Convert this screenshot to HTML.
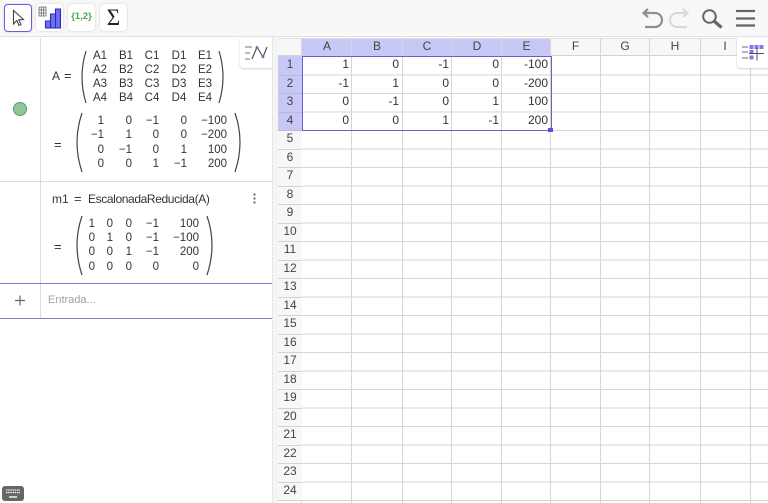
<!DOCTYPE html>
<html><head><meta charset="utf-8"><style>
*{box-sizing:border-box;margin:0;padding:0}
html,body{width:768px;height:503px;overflow:hidden;background:#fff;font-family:"Liberation Sans",sans-serif}
#wrap{position:absolute;left:0;top:0;width:768px;height:503px;filter:blur(.35px)}
.a{position:absolute}
#top{left:0;top:0;width:768px;height:37px;background:#f8f8f8;border-bottom:1px solid #e2e2e2}
.btn{position:absolute;top:4px;width:27px;height:27px;background:#fff;border-radius:4px;box-shadow:0 0 2px rgba(0,0,0,.18)}
#split{left:272px;top:37px;width:6px;height:466px;background:#f4f4f4;border-left:1px solid #e6e6e6}
#sheet{left:278px;top:38px;width:490px;height:465px;background-color:#fff;
background-image:repeating-linear-gradient(to bottom,transparent 0,transparent 17.5px,#d6d6d6 17.5px,#d6d6d6 18.5px);
background-position:0 19px}
#ch{left:278px;top:38px;width:490px;height:18px;background:#f7f7f7;border-bottom:1px solid #d2d2d2;border-top:1px solid #e2e2e2}
.vl{position:absolute;top:38px;height:465px;width:1px;background:#d6d6d6}
.cl{position:absolute;top:37px;height:18px;line-height:18px;font-size:12px;color:#444;text-align:center}
.sel{background:#c8c8f6}
.rl{position:absolute;left:278px;width:24px;height:18.5px;margin-top:1px;line-height:14px;font-size:12px;color:#444;text-align:center;background:#f7f7f7;border-bottom:1px solid #d2d2d2}
.rl.sel{background:#c8c8f6;border-bottom-color:#b9b9dd}
#grid{left:302px;top:56px;display:grid;grid-template-columns:50px 50px 50px 50px 49px;grid-auto-rows:18.5px;font-size:12px;color:#333}
#grid div{text-align:right;padding-right:3px;line-height:17.5px}
.m{position:absolute;font-size:11.5px;line-height:14px;height:14px;color:#333;white-space:nowrap}
.c{transform:translateX(-50%)}
.r{transform:translateX(-100%)}
svg{position:absolute;overflow:visible}
</style></head><body><div id="wrap">

<div class="a" id="top"></div>
<div class="btn" style="left:4px;width:28px;height:28px;border:1.5px solid #6a5fd8"><svg style="left:0;top:0" width="24" height="24"><path d="M8.500 5.500 L8.500 19 L11.800 15.500 L14 20.500 L16 19.500 L13.800 14.800 L18.500 14.500 Z" fill="#fff" stroke="#444" stroke-width="1.100"/></svg></div>
<div class="btn" style="left:36px"><svg style="left:0;top:0" width="27" height="27"><path d="M3 3h7v9h-7zM5.300 3v9M7.700 3v9M3 6h7M3 9h7" fill="none" stroke="#666" stroke-width=".8"/><path d="M9.500 24v-7h5v-7h5v-5h5v19zM14.500 24v-7M19.500 24v-14" fill="#7070ee" stroke="#2a2ab8" stroke-width="1.100"/></svg></div>
<div class="btn" style="left:68px;color:#4aa84e;font-size:9.500px;font-weight:bold;text-align:center;line-height:26px">{1,2}</div>
<div class="btn" style="left:100px;color:#222;font-family:'Liberation Serif',serif;font-size:23px;text-align:center;line-height:28px">Σ</div>

<svg style="left:640px;top:8px" width="128" height="22">
<path d="M8 1 L3.500 5 L8 9 M3.500 5 H15 A7 7 0 0 1 15 19 H5" fill="none" stroke="#8f8f8f" stroke-width="2.200"/>
<path d="M43 1 L47.500 5 L43 9 M47.500 5 H37 A7 7 0 0 0 37 19 H47" fill="none" stroke="#d9d9d9" stroke-width="2.200"/>
<circle cx="69.500" cy="8.500" r="6.300" fill="none" stroke="#666" stroke-width="2"/><path d="M74 13 L81.500 19.500" stroke="#666" stroke-width="3.200"/>
<path d="M96 3H115M96 10.500H115M96 17.500H115" stroke="#666" stroke-width="2.200"/>
</svg>

<div class="a" style="left:40px;top:38px;width:1px;height:280px;background:#dcdcdc"></div>
<div class="a" style="left:0;top:181px;width:272px;height:1px;background:#dcdcdc"></div>
<div class="a" style="left:0;top:283px;width:272px;height:1px;background:#8278cc"></div>
<div class="a" style="left:0;top:318px;width:272px;height:1px;background:#8278cc"></div>
<div class="a" style="left:13px;top:102px;width:14px;height:14px;border-radius:50%;background:#8fc79a;border:1px solid #5b9a6a"></div>

<div class="a" style="left:240px;top:38px;width:32px;height:30px;background:#fff;border-radius:0 0 0 4px;box-shadow:0 1px 2px rgba(0,0,0,.18)"></div>
<svg style="left:245px;top:45px" width="24" height="16"><path d="M0 2H7M0 8H5M0 14H5" stroke="#777" stroke-width="1.100"/><path d="M7 14 L12 2 L18 12 L22 2" fill="none" stroke="#555" stroke-width="1.200"/><circle cx="12" cy="2.500" r="1.400" fill="#6a6ad0"/><circle cx="18" cy="12" r="1.400" fill="#6a6ad0"/></svg>

<div class="m" style="left:52px;top:69px;font-size:12px">A</div><div class="m" style="left:64px;top:69px;font-size:13px">=</div>
<div class="m" style="left:54px;top:138px;font-size:13px">=</div>
<div class="m" style="left:54px;top:240px;font-size:13px">=</div>
<div class="m" style="left:52px;top:192px;font-size:12px">m1</div><div class="m" style="left:74px;top:192px;font-size:13px">=</div>
<div class="m" style="left:88px;top:192px;font-size:12px;letter-spacing:-.38px">EscalonadaReducida(A)</div>
<svg style="left:252px;top:193px" width="5" height="12"><circle cx="2.500" cy="1.500" r="1.100" fill="#666"/><circle cx="2.500" cy="5.500" r="1.100" fill="#666"/><circle cx="2.500" cy="9.500" r="1.100" fill="#666"/></svg>
<svg style="left:15px;top:295px" width="11" height="11"><path d="M0 5.500H10M5 .5V10.500" stroke="#666" stroke-width="1.200"/></svg>
<div class="a" style="left:48px;top:293px;font-size:11px;line-height:14px;color:#a0a0a0">Entrada...</div>

<svg style="left:0;top:0" width="272" height="290" fill="none" stroke="#444" stroke-width="1.200">
<path d="M86 51 Q78 77 86 103"/><path d="M219 51 Q227 77 219 103"/>
<path d="M82 113 Q72 142 82 172"/><path d="M235 113 Q245 142 235 172"/>
<path d="M82 216 Q72 245 82 275"/><path d="M207 216 Q217 245 207 275"/>
</svg>

<div class="m c" style="left:100px;top:49px">A1</div><div class="m c" style="left:126px;top:49px">B1</div><div class="m c" style="left:152px;top:49px">C1</div><div class="m c" style="left:179px;top:49px">D1</div><div class="m c" style="left:205px;top:49px">E1</div>
<div class="m c" style="left:100px;top:63px">A2</div><div class="m c" style="left:126px;top:63px">B2</div><div class="m c" style="left:152px;top:63px">C2</div><div class="m c" style="left:179px;top:63px">D2</div><div class="m c" style="left:205px;top:63px">E2</div>
<div class="m c" style="left:100px;top:77px">A3</div><div class="m c" style="left:126px;top:77px">B3</div><div class="m c" style="left:152px;top:77px">C3</div><div class="m c" style="left:179px;top:77px">D3</div><div class="m c" style="left:205px;top:77px">E3</div>
<div class="m c" style="left:100px;top:91px">A4</div><div class="m c" style="left:126px;top:91px">B4</div><div class="m c" style="left:152px;top:91px">C4</div><div class="m c" style="left:179px;top:91px">D4</div><div class="m c" style="left:205px;top:91px">E4</div>

<div class="m r" style="left:104px;top:114px">1</div><div class="m r" style="left:132px;top:114px">0</div><div class="m r" style="left:159px;top:114px">−1</div><div class="m r" style="left:187px;top:114px">0</div><div class="m r" style="left:227px;top:114px">−100</div>
<div class="m r" style="left:104px;top:128px">−1</div><div class="m r" style="left:132px;top:128px">1</div><div class="m r" style="left:159px;top:128px">0</div><div class="m r" style="left:187px;top:128px">0</div><div class="m r" style="left:227px;top:128px">−200</div>
<div class="m r" style="left:104px;top:143px">0</div><div class="m r" style="left:132px;top:143px">−1</div><div class="m r" style="left:159px;top:143px">0</div><div class="m r" style="left:187px;top:143px">1</div><div class="m r" style="left:227px;top:143px">100</div>
<div class="m r" style="left:104px;top:157px">0</div><div class="m r" style="left:132px;top:157px">0</div><div class="m r" style="left:159px;top:157px">1</div><div class="m r" style="left:187px;top:157px">−1</div><div class="m r" style="left:227px;top:157px">200</div>

<div class="m r" style="left:95px;top:217px">1</div><div class="m r" style="left:113px;top:217px">0</div><div class="m r" style="left:132px;top:217px">0</div><div class="m r" style="left:159px;top:217px">−1</div><div class="m r" style="left:199px;top:217px">100</div>
<div class="m r" style="left:95px;top:231px">0</div><div class="m r" style="left:113px;top:231px">1</div><div class="m r" style="left:132px;top:231px">0</div><div class="m r" style="left:159px;top:231px">−1</div><div class="m r" style="left:199px;top:231px">−100</div>
<div class="m r" style="left:95px;top:245px">0</div><div class="m r" style="left:113px;top:245px">0</div><div class="m r" style="left:132px;top:245px">1</div><div class="m r" style="left:159px;top:245px">−1</div><div class="m r" style="left:199px;top:245px">200</div>
<div class="m r" style="left:95px;top:260px">0</div><div class="m r" style="left:113px;top:260px">0</div><div class="m r" style="left:132px;top:260px">0</div><div class="m r" style="left:159px;top:260px">0</div><div class="m r" style="left:199px;top:260px">0</div>

<svg style="left:2px;top:486px" width="22" height="15"><rect x="0" y="0" width="22" height="15" rx="3" fill="#666"/><path d="M4 4H18M4 6.500H18" stroke="#fff" stroke-width="1.200" stroke-dasharray="1.400 .8"/><path d="M7 11H15" stroke="#fff" stroke-width="1.400"/></svg>

<div class="a" id="split"></div>
<div class="a" id="sheet"></div>
<div class="a" id="ch"></div>
<div class="cl sel" style="left:302px;width:249px;top:39px;height:17px"></div>
<div class="a sel" style="left:278px;top:56px;width:24px;height:2px"></div>

<div class="vl" style="left:301px"></div><div class="vl" style="left:351px"></div><div class="vl" style="left:402px"></div><div class="vl" style="left:451px"></div><div class="vl" style="left:501px"></div><div class="vl" style="left:550px"></div><div class="vl" style="left:600px"></div><div class="vl" style="left:649px"></div><div class="vl" style="left:700px"></div><div class="vl" style="left:750px"></div>

<div class="cl" style="left:302px;width:50px">A</div><div class="cl" style="left:352px;width:50px">B</div><div class="cl" style="left:402px;width:50px">C</div><div class="cl" style="left:452px;width:50px">D</div><div class="cl" style="left:502px;width:49px">E</div><div class="cl" style="left:551px;width:49px">F</div><div class="cl" style="left:600px;width:50px">G</div><div class="cl" style="left:650px;width:50px">H</div><div class="cl" style="left:700px;width:50px">I</div>

<div class="rl sel" style="top:56px">1</div><div class="rl sel" style="top:74.500px">2</div><div class="rl sel" style="top:93px">3</div><div class="rl sel" style="top:111.500px">4</div>
<div class="rl" style="top:130px">5</div><div class="rl" style="top:148.500px">6</div><div class="rl" style="top:167px">7</div><div class="rl" style="top:185.500px">8</div><div class="rl" style="top:204px">9</div><div class="rl" style="top:222.500px">10</div><div class="rl" style="top:241px">11</div><div class="rl" style="top:259.500px">12</div><div class="rl" style="top:278px">13</div><div class="rl" style="top:296.500px">14</div><div class="rl" style="top:315px">15</div><div class="rl" style="top:333.500px">16</div><div class="rl" style="top:352px">17</div><div class="rl" style="top:370.500px">18</div><div class="rl" style="top:389px">19</div><div class="rl" style="top:407.500px">20</div><div class="rl" style="top:426px">21</div><div class="rl" style="top:444.500px">22</div><div class="rl" style="top:463px">23</div><div class="rl" style="top:481.500px">24</div>

<div class="a" id="grid">
<div>1</div><div>0</div><div>-1</div><div>0</div><div>-100</div>
<div>-1</div><div>1</div><div>0</div><div>0</div><div>-200</div>
<div>0</div><div>-1</div><div>0</div><div>1</div><div>100</div>
<div>0</div><div>0</div><div>1</div><div>-1</div><div>200</div>
</div>
<div class="a" style="left:301.500px;top:56px;width:250px;height:74.500px;border:1.600px solid #6a60c8"></div>
<div class="a" style="left:548px;top:127.500px;width:4.500px;height:4.500px;background:#5a50d8"></div>

<div class="a" style="left:737px;top:38px;width:31px;height:30px;background:#fff;border-radius:0 0 0 4px;box-shadow:0 1px 2px rgba(0,0,0,.18)"></div>
<svg style="left:741px;top:44px" width="24" height="18"><path d="M1 3H7M1 8H7M1 14H7" stroke="#888" stroke-width="1.200"/><path d="M8.500 1h4v4h-4zM13.500 1h4v4h-4zM18.500 1h4v4h-4zM8.500 6h4v4h-4zM8.500 11.500h4v4h-4z" fill="#7c7ce4"/><path d="M8 9.500H23M16 4V16.500" stroke="#555" stroke-width="1"/></svg>

</div></body></html>
